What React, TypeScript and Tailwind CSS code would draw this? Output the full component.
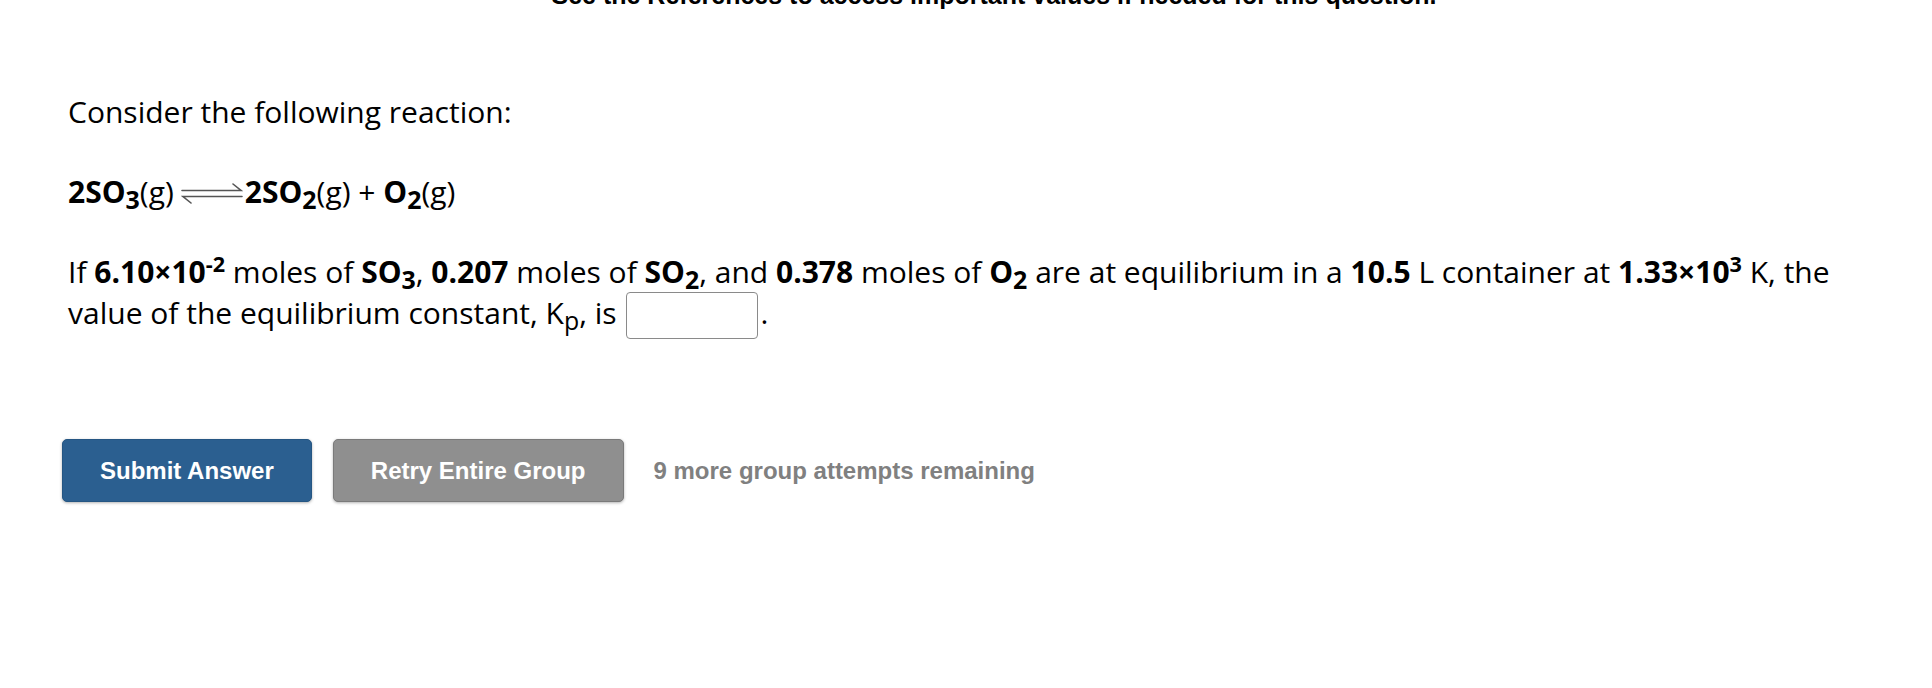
function EqArrow() {
  return (
    <svg
      width="62"
      height="24"
      viewBox="0 0 62 24"
      className="ml-[7px] mr-[2px] inline-block align-middle"
      aria-hidden
    >
      <g stroke="#555" strokeWidth="1.6" fill="none" strokeLinecap="round">
        <path d="M1 7.5 H60 L52 1" />
        <path d="M61 13.5 H2 L10 20" />
      </g>
    </svg>
  );
}

function Sub({ children }: { children: React.ReactNode }) {
  return <sub className="text-[0.83em] leading-none">{children}</sub>;
}

function Sup({ children }: { children: React.ReactNode }) {
  return <sup className="text-[0.72em] leading-none">{children}</sup>;
}

export default function App() {
  return (
    <div className="h-[688px] w-[1932px] overflow-hidden bg-white text-black">
      <div className="-mt-[17px] pl-[56px] text-center font-['Liberation_Sans',Arial,sans-serif] text-[25px] font-bold leading-[24px]">
        See the References to access important values if needed for this question.
      </div>

      <div className="pl-[62px] pt-[85px]">
        <div className="w-[1800px] pl-[6px] font-['Open_Sans',sans-serif] text-[30px] leading-[40px]">
          <p>Consider the following reaction:</p>

          <p className="mt-10 whitespace-nowrap">
            <b>
              2SO<Sub>3</Sub>
            </b>
            (g)
            <EqArrow />
            <b>
              2SO<Sub>2</Sub>
            </b>
            (g) + <b>
              O<Sub>2</Sub>
            </b>
            (g)
          </p>

          <p className="mt-10">
            If{" "}
            <b>
              6.10×10<Sup>-2</Sup>
            </b>{" "}
            moles of{" "}
            <b>
              SO<Sub>3</Sub>
            </b>
            , <b>0.207</b> moles of{" "}
            <b>
              SO<Sub>2</Sub>
            </b>
            , and <b>0.378</b> moles of{" "}
            <b>
              O<Sub>2</Sub>
            </b>{" "}
            are at equilibrium in a <b>10.5</b> L container at{" "}
            <b>
              1.33×10<Sup>3</Sup>
            </b>{" "}
            K, the value of the equilibrium constant, K<Sub>p</Sub>, is{" "}
            <input
              type="text"
              aria-label="answer"
              className="mx-[2px] inline-block h-[47px] w-[132px] rounded-[4px] border border-[#8a8a8a] align-middle"
            />
            .
          </p>
        </div>

        <div className="mt-[100px] flex items-center font-['Liberation_Sans',Arial,sans-serif] text-[24px] font-bold">
          <button className="h-[63px] rounded-[5px] border border-[#255683] bg-[#2b5f90] px-[37px] text-white shadow-[0_1px_3px_rgba(0,0,0,0.3)]">
            Submit Answer
          </button>
          <button className="ml-[21px] h-[63px] rounded-[5px] border border-[#7a7a7a] bg-[#8f8f8f] px-[37px] text-white shadow-[0_1px_3px_rgba(0,0,0,0.3)]">
            Retry Entire Group
          </button>
          <span className="ml-[30px] text-[#808080]">9 more group attempts remaining</span>
        </div>
      </div>
    </div>
  );
}
